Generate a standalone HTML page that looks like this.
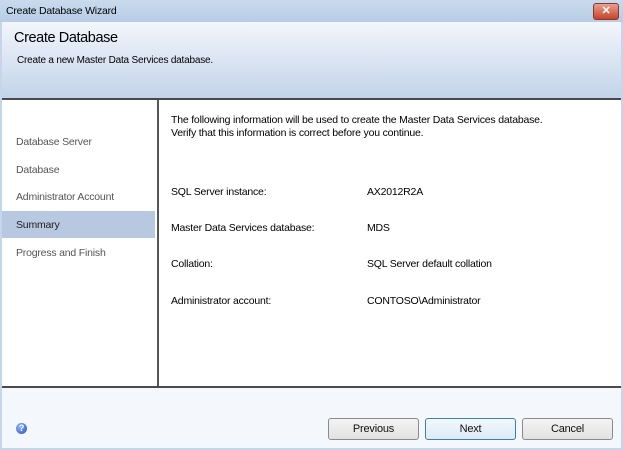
<!DOCTYPE html>
<html><head><style>
body{margin:0;width:623px;height:450px;overflow:hidden;font-family:"Liberation Sans",sans-serif;font-size:10.5px;letter-spacing:-0.2px;background:#fff;position:relative}
.a{position:absolute;white-space:nowrap}
.btn{position:absolute;top:418px;width:89px;height:20px;border:1px solid #8a8a8a;border-radius:3px;background:linear-gradient(#f4f4f4,#e2e2e2);text-align:center;line-height:20px;font-size:11px;color:#111}
</style></head><body>
<div class="a" style="left:0;top:0;width:623px;height:22px;background:linear-gradient(#c9daee,#b7cde6)"></div>
<div class="a" style="left:6px;top:5px;font-size:10.5px;color:#000">Create Database Wizard</div>
<div class="a" style="left:593px;top:3px;width:24px;height:15px;border-radius:3px;background:linear-gradient(#e8a08d,#c7432a);border:1px solid #8a3a2c;color:#fff;font-weight:bold;text-align:center;line-height:14px;font-size:11px">✕</div>
<div class="a" style="left:2px;top:22px;width:619px;height:76px;background:linear-gradient(#f3f6fb,#c3d3ea)"></div>
<div class="a" style="left:14px;top:30px;font-size:14.5px;letter-spacing:-0.4px;color:#000">Create Database</div>
<div class="a" style="left:17px;top:55px;font-size:10px;color:#000">Create a new Master Data Services database.</div>
<div class="a" style="left:2px;top:98px;width:619px;height:2px;background:#4a4a4a"></div>
<div class="a" style="left:0;top:22px;width:2px;height:428px;background:#c5d6ea"></div>
<div class="a" style="left:621px;top:22px;width:2px;height:428px;background:#c5d6ea"></div>
<div class="a" style="left:157px;top:100px;width:2px;height:287px;background:#555"></div>
<div class="a" style="left:2px;top:211px;width:153px;height:27px;background:#b8c8e0"></div>
<div class="a" style="left:16px;top:136px;color:#555">Database Server</div>
<div class="a" style="left:16px;top:164px;color:#555">Database</div>
<div class="a" style="left:16px;top:191px;color:#555">Administrator Account</div>
<div class="a" style="left:16px;top:219px;color:#222">Summary</div>
<div class="a" style="left:16px;top:247px;color:#555">Progress and Finish</div>
<div class="a" style="left:171px;top:114px;line-height:13px;color:#000">The following information will be used to create the Master Data Services database.<br>Verify that this information is correct before you continue.</div>
<div class="a" style="left:171px;top:186px">SQL Server instance:</div><div class="a" style="left:367px;top:186px">AX2012R2A</div>
<div class="a" style="left:171px;top:222px">Master Data Services database:</div><div class="a" style="left:367px;top:222px">MDS</div>
<div class="a" style="left:171px;top:258px">Collation:</div><div class="a" style="left:367px;top:258px">SQL Server default collation</div>
<div class="a" style="left:171px;top:295px">Administrator account:</div><div class="a" style="left:367px;top:295px">CONTOSO\Administrator</div>
<div class="a" style="left:2px;top:386px;width:619px;height:2px;background:#4a4a4a"></div>
<div class="a" style="left:2px;top:388px;width:619px;height:60px;background:#f4f8fc"></div>
<div class="a" style="left:0;top:448px;width:623px;height:2px;background:#c5d6ea"></div>
<div class="a" style="left:16px;top:423px;width:11px;height:11px;border-radius:50%;background:radial-gradient(circle at 35% 35%,#8fb5f5,#1e4fc2);color:#fff;font-size:9px;font-weight:bold;text-align:center;line-height:11px">?</div>
<div class="btn" style="left:328px">Previous</div>
<div class="btn" style="left:425px;border-color:#3c7fb1;background:linear-gradient(#f2f8fc,#ddeaf6)">Next</div>
<div class="btn" style="left:522px">Cancel</div>
</body></html>
